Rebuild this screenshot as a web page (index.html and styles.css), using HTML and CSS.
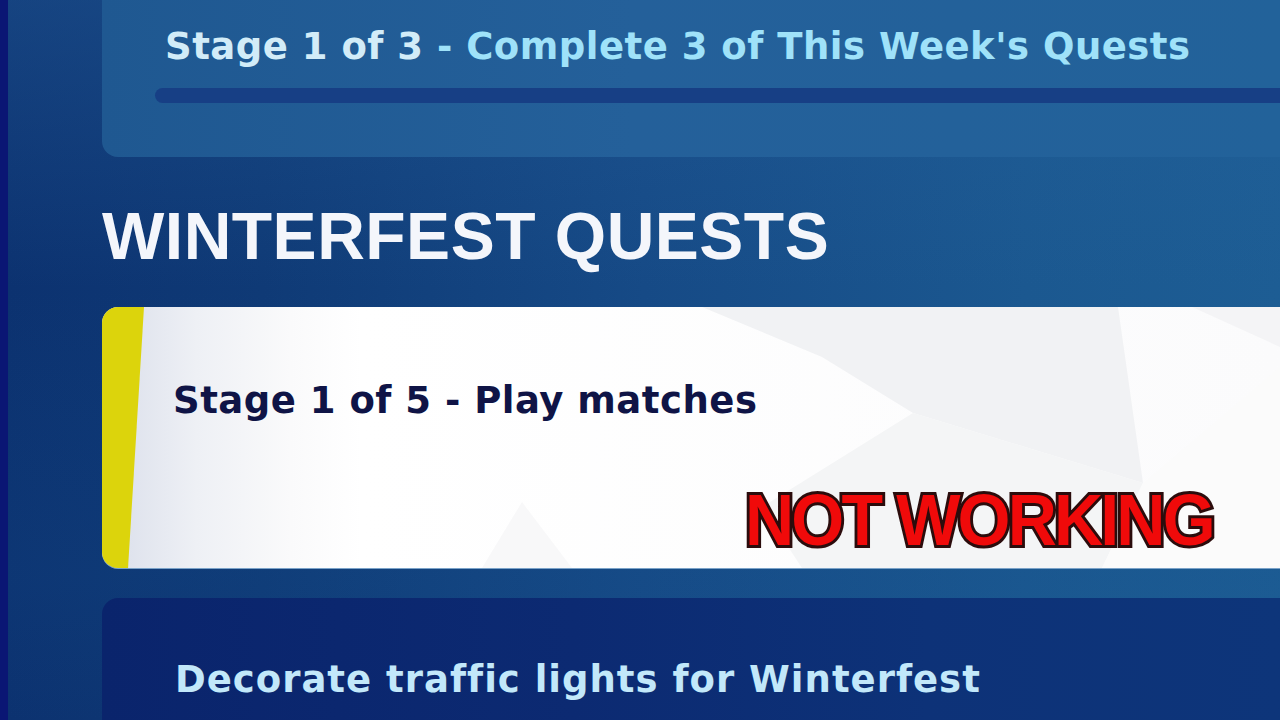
FILE: index.html
```html
<!DOCTYPE html>
<html lang="en">
<head>
<meta charset="utf-8">
<title>Winterfest Quests</title>
<link rel="stylesheet" href="styles.css">
</head>
<body>
<div class="screen">
  <main class="quests">
    <section class="card card-week">
      <p class="quest-title"><span class="stage">Stage 1 of 3</span> <span class="task">- Complete 3 of This Week's Quests</span></p>
      <div class="progress"></div>
    </section>

    <h1 class="section-title">WINTERFEST QUESTS</h1>

    <section class="card card-active">
      <svg class="facets" viewBox="0 0 1178 261" preserveAspectRatio="none" aria-hidden="true">
        <polygon points="600,0 1016,0 1041,176 811,106 720,50" fill="#f1f2f4"/>
        <polygon points="811,106 1041,176 1000,261 700,261 660,200" fill="#f4f5f6"/>
        <polygon points="380,261 420,195 470,261" fill="#f8f8f9"/>
        <polygon points="1041,176 1178,60 1178,261 1000,261" fill="#fbfbfb"/>
        <polygon points="1090,0 1178,0 1178,40" fill="#f4f4f6"/>
      </svg>
      <div class="accent"></div>
      <p class="quest-title dark"><span class="stage">Stage 1 of 5</span> <span class="task">- Play matches</span></p>
      <div class="stamp">NOT WORKING</div>
    </section>

    <section class="card card-next">
      <p class="quest-title light">Decorate traffic lights for Winterfest</p>
    </section>
  </main>
</div>
</body>
</html>
```

FILE: styles.css
```css
html, body {
  margin: 0;
  padding: 0;
}

body {
  width: 1280px;
  height: 720px;
  overflow: hidden;
  font-family: "DejaVu Sans", "Liberation Sans", sans-serif;
}

.screen {
  width: 1280px;
  height: 720px;
  box-sizing: border-box;
  border-left: 8px solid #0a1674;
  background:
    linear-gradient(180deg, rgba(40, 100, 160, 0.35) 0%, rgba(20, 60, 120, 0.0) 40%, rgba(20, 80, 140, 0.15) 80%, rgba(0, 0, 0, 0) 100%),
    linear-gradient(90deg, #0c3270 0%, #0f3a76 20%, #164a86 50%, #1b5890 80%, #1d5d94 100%);
  overflow: hidden;
}

.quests {
  display: flex;
  flex-direction: column;
  padding-left: 94px;
}

.card {
  position: relative;
  border-radius: 16px 0 0 16px;
}

.card-week {
  height: 157px;
  border-radius: 0 0 0 16px;
  background: linear-gradient(90deg, #1f5891 0%, #24609a 45%, #22629a 100%);
  box-sizing: border-box;
  padding: 22px 0 0 63px;
}

.quest-title {
  margin: 0;
  font-family: "DejaVu Sans", "Liberation Sans", sans-serif;
  font-weight: 700;
  font-size: 37px;
  line-height: 50px;
  letter-spacing: 0.5px;
  white-space: nowrap;
}

.quest-title .stage {
  color: #d2ecf8;
}

.quest-title .task {
  color: #9fe2f9;
}

.progress {
  margin: 16px 0 0 -10px;
  height: 15px;
  border-radius: 8px 0 0 8px;
  background: #173f85;
}

.section-title {
  margin: 46px 0 0 0;
  font-family: "Liberation Sans", "Roboto", sans-serif;
  font-weight: 700;
  font-size: 66px;
  line-height: 66px;
  height: 66px;
  color: #f4f6fb;
  letter-spacing: 0.5px;
  white-space: nowrap;
}

.card-active {
  margin-top: 38px;
  height: 261px;
  overflow: hidden;
  background: linear-gradient(90deg, #d9deea 0%, #eef0f5 8%, #fafafb 16%, #ffffff 22%, #fbfbfc 100%);
  box-sizing: border-box;
  padding: 69px 0 0 71px;
  box-shadow: 0 1px 0 #7aa2c8;
}

.facets {
  position: absolute;
  left: 0;
  top: 0;
  width: 100%;
  height: 100%;
}

.accent {
  position: absolute;
  left: 0;
  top: 0;
  width: 42px;
  height: 100%;
  background: #dcd40c;
  clip-path: polygon(0 0, 100% 0, 62% 100%, 0 100%);
}

.quest-title.dark {
  position: relative;
}

.quest-title.dark .stage,
.quest-title.dark .task {
  color: #0f1446;
}

.stamp {
  position: absolute;
  left: 643px;
  top: 177px;
  font-family: "Liberation Sans", "Roboto", sans-serif;
  font-weight: 700;
  font-size: 72px;
  line-height: 72px;
  letter-spacing: -3px;
  color: #f00a0a;
  -webkit-text-stroke: 6px #2b0c0c;
  paint-order: stroke fill;
  transform: scaleX(0.945);
  transform-origin: left top;
  white-space: nowrap;
}

.card-next {
  margin-top: 30px;
  height: 140px;
  background: linear-gradient(90deg, #0a246c 0%, #0c2a72 40%, #0d3278 70%, #0d357a 100%);
  box-sizing: border-box;
  padding: 57px 0 0 73px;
}

.quest-title.light {
  font-size: 37px;
  letter-spacing: 1px;
  color: #c2e8fa;
}
```
